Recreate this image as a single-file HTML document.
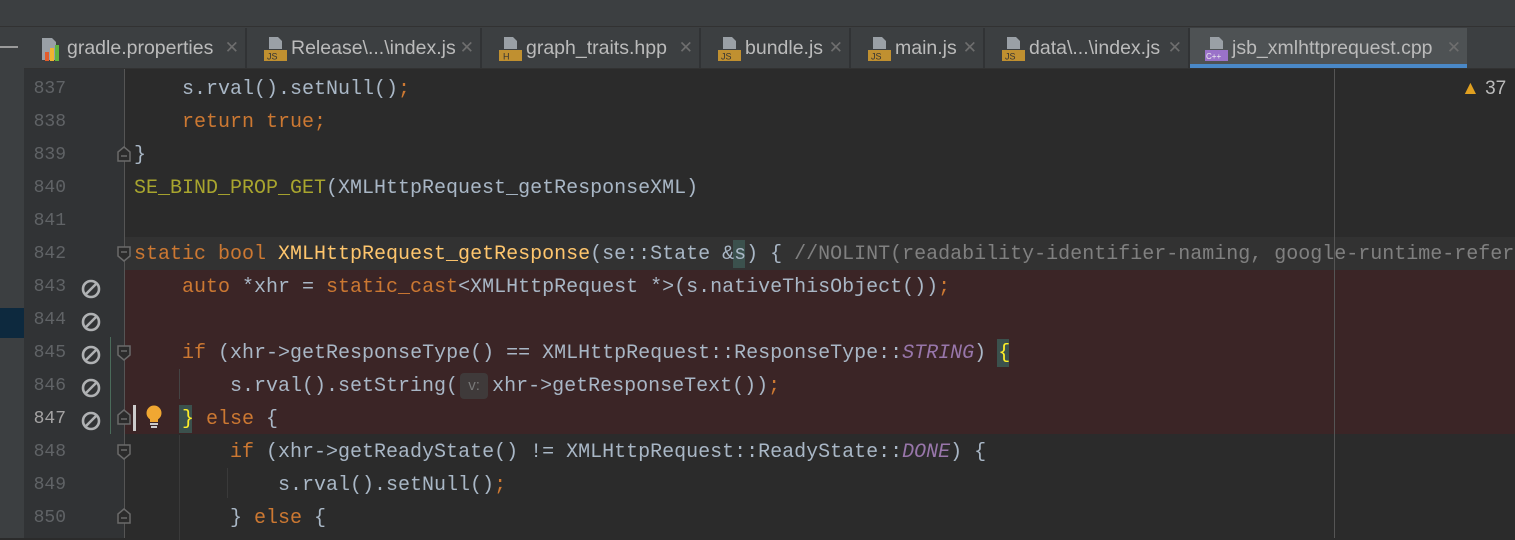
<!DOCTYPE html>
<html><head><meta charset="utf-8"><style>
*{margin:0;padding:0;box-sizing:border-box}
body{width:1515px;height:538px;overflow:hidden;background:#2b2b2b;position:relative;font-family:"Liberation Sans",sans-serif}
.a{position:absolute}
.top{left:0;top:0;width:1515px;height:27px;background:#3c3f41;border-bottom:1px solid #323232}
.left{left:0;top:27px;width:24px;height:511px;background:#3c3f41}
.tabs{left:24px;top:27px;width:1491px;height:42px;background:#3c3f41;border-bottom:1px solid #323232}
.tab{position:absolute;top:28px;height:40px;background:#3c3f41;color:#bbbbbb;font-size:19.5px;line-height:40px;border-right:2px solid #313335}
.tab .ic{position:absolute;left:14px;top:8px;width:24px;height:26px}
.tab .t{position:absolute;left:42px;top:0}
.tab .x{position:absolute;right:6px;top:0;color:#6e6e6e;font-size:17px}
.gut{left:24px;top:69px;width:100px;height:469px;background:#313335}
.ln{position:absolute;left:24px;width:42px;text-align:right;font-family:"Liberation Mono",monospace;font-size:18px;color:#606366;line-height:33px}
.code{position:absolute;left:134px;font-family:"Liberation Mono",monospace;font-size:20px;line-height:33px;color:#a9b7c6;white-space:pre}
.k{color:#cc7832}.f{color:#ffc66d}.m{color:#a8a52e}.c{color:#808080}.e{color:#9876aa;font-style:italic}
.no{position:absolute;left:80px;width:22px;height:22px}
.fold{position:absolute;left:117px;width:14px;height:16px}
</style></head><body>
<div class="a top"></div>
<div class="a left"></div>
<div class="a" style="left:0;top:46px;width:18px;height:2px;background:#9a9a9a"></div>
<div class="a" style="left:0;top:308px;width:24px;height:30px;background:#0d293e"></div>
<div class="a tabs"></div>

<div class="tab" style="left:25px;width:222px"><svg class="ic" viewBox="0 0 24 26"><path d="M3 2h10l4 4v18H3z" fill="#9aa0a6"/><rect x="6" y="16" width="4" height="9" fill="#e35c2b"/><rect x="11" y="12" width="4" height="13" fill="#f0b330"/><rect x="16" y="9" width="4" height="16" fill="#5fb340"/></svg><span class="t">gradle.properties</span><span class="x">✕</span></div>
<div class="tab" style="left:249px;width:233px"><svg class="ic" viewBox="0 0 24 26"><path d="M6 1h9l4 4v8H6z" fill="#9aa0a6"/><rect x="1" y="14" width="23" height="11" fill="#c09030"/><text x="4" y="23.5" font-size="9" fill="#333" font-family="Liberation Sans">JS</text></svg><span class="t">Release\...\index.js</span><span class="x">✕</span></div>
<div class="tab" style="left:484px;width:217px"><svg class="ic" viewBox="0 0 24 26"><path d="M6 1h9l4 4v8H6z" fill="#9aa0a6"/><rect x="1" y="14" width="23" height="11" fill="#c09030"/><text x="5" y="23.5" font-size="9" fill="#333" font-family="Liberation Sans">H</text></svg><span class="t">graph_traits.hpp</span><span class="x">✕</span></div>
<div class="tab" style="left:703px;width:148px"><svg class="ic" viewBox="0 0 24 26"><path d="M6 1h9l4 4v8H6z" fill="#9aa0a6"/><rect x="1" y="14" width="23" height="11" fill="#c09030"/><text x="4" y="23.5" font-size="9" fill="#333" font-family="Liberation Sans">JS</text></svg><span class="t">bundle.js</span><span class="x">✕</span></div>
<div class="tab" style="left:853px;width:132px"><svg class="ic" viewBox="0 0 24 26"><path d="M6 1h9l4 4v8H6z" fill="#9aa0a6"/><rect x="1" y="14" width="23" height="11" fill="#c09030"/><text x="4" y="23.5" font-size="9" fill="#333" font-family="Liberation Sans">JS</text></svg><span class="t">main.js</span><span class="x">✕</span></div>
<div class="tab" style="left:987px;width:203px"><svg class="ic" viewBox="0 0 24 26"><path d="M6 1h9l4 4v8H6z" fill="#9aa0a6"/><rect x="1" y="14" width="23" height="11" fill="#c09030"/><text x="4" y="23.5" font-size="9" fill="#333" font-family="Liberation Sans">JS</text></svg><span class="t">data\...\index.js</span><span class="x">✕</span></div>
<div class="tab" style="left:1190px;width:277px;background:#4e5254;border-right:none"><svg class="ic" viewBox="0 0 24 26"><path d="M6 1h9l4 4v8H6z" fill="#9aa0a6"/><rect x="1" y="14" width="23" height="11" fill="#9a72c9"/><text x="2" y="23" font-size="8" fill="#eee" font-family="Liberation Sans">C++</text></svg><span class="t">jsb_xmlhttprequest.cpp</span><span class="x">✕</span></div>
<div class="a" style="left:1190px;top:64px;width:277px;height:4px;background:#4a88c7"></div>

<div class="a gut"></div>
<div class="a" style="left:124px;top:237px;width:1391px;height:33px;background:#323232"></div>
<div class="a" style="left:124px;top:270px;width:1391px;height:164px;background:#3b2526"></div>
<div class="a" style="left:24px;top:402px;width:100px;height:33px;background:#313335"></div>
<div class="a" style="left:124px;top:69px;width:1px;height:469px;background:#555"></div>
<div class="a" style="left:1334px;top:69px;width:1px;height:469px;background:#555"></div>
<div class="a" style="left:110px;top:337px;width:1px;height:97px;background:#4a6b5a"></div>
<div class="a" style="left:133px;top:405px;width:3px;height:26px;background:#ccc"></div>
<div class="a" style="left:179px;top:405px;width:13px;height:28px;background:#3b514d"></div>
<div class="a" style="left:997px;top:339px;width:12px;height:28px;background:#3b514d"></div>
<div class="a" style="left:733px;top:240px;width:12px;height:28px;background:#3b514d"></div>
<div class="a" style="left:179px;top:369px;width:1px;height:30px;background:#444"></div>
<div class="a" style="left:179px;top:435px;width:1px;height:105px;background:#3a3a3a"></div>
<div class="a" style="left:227px;top:468px;width:1px;height:30px;background:#3a3a3a"></div>

<div class="a" style="left:1461px;top:78px;font-size:19px;color:#bbb"><span style="color:#e0a020">▲</span> 37</div>

<div class="ln" style="top:73px">837</div>
<div class="ln" style="top:106px">838</div>
<div class="ln" style="top:139px">839</div>
<div class="ln" style="top:172px">840</div>
<div class="ln" style="top:205px">841</div>
<div class="ln" style="top:238px">842</div>
<div class="ln" style="top:271px">843</div>
<div class="ln" style="top:304px">844</div>
<div class="ln" style="top:337px">845</div>
<div class="ln" style="top:370px">846</div>
<div class="ln" style="top:403px;color:#a4a3a3">847</div>
<div class="ln" style="top:436px">848</div>
<div class="ln" style="top:469px">849</div>
<div class="ln" style="top:502px">850</div>

<svg class="no" style="top:278px" viewBox="0 0 22 22"><circle cx="11" cy="11" r="8" fill="none" stroke="#afb1b3" stroke-width="2.6"/><path d="M6 16L16 6" stroke="#afb1b3" stroke-width="2.6"/></svg>
<svg class="no" style="top:311px" viewBox="0 0 22 22"><circle cx="11" cy="11" r="8" fill="none" stroke="#afb1b3" stroke-width="2.6"/><path d="M6 16L16 6" stroke="#afb1b3" stroke-width="2.6"/></svg>
<svg class="no" style="top:344px" viewBox="0 0 22 22"><circle cx="11" cy="11" r="8" fill="none" stroke="#afb1b3" stroke-width="2.6"/><path d="M6 16L16 6" stroke="#afb1b3" stroke-width="2.6"/></svg>
<svg class="no" style="top:377px" viewBox="0 0 22 22"><circle cx="11" cy="11" r="8" fill="none" stroke="#afb1b3" stroke-width="2.6"/><path d="M6 16L16 6" stroke="#afb1b3" stroke-width="2.6"/></svg>
<svg class="no" style="top:410px" viewBox="0 0 22 22"><circle cx="11" cy="11" r="8" fill="none" stroke="#afb1b3" stroke-width="2.6"/><path d="M6 16L16 6" stroke="#afb1b3" stroke-width="2.6"/></svg>

<svg class="fold" style="top:146px" viewBox="0 0 14 16"><path d="M1 15V6L7 1L13 6V15Z" fill="#2b2b2b" stroke="#6a6a6a" stroke-width="1.5"/><path d="M4 10h6" stroke="#6a6a6a" stroke-width="1.5"/></svg>
<svg class="fold" style="top:246px" viewBox="0 0 14 16"><path d="M1 1V10L7 15L13 10V1Z" fill="#2b2b2b" stroke="#6a6a6a" stroke-width="1.5"/><path d="M4 6h6" stroke="#6a6a6a" stroke-width="1.5"/></svg>
<svg class="fold" style="top:345px" viewBox="0 0 14 16"><path d="M1 1V10L7 15L13 10V1Z" fill="#2b2b2b" stroke="#6a6a6a" stroke-width="1.5"/><path d="M4 6h6" stroke="#6a6a6a" stroke-width="1.5"/></svg>
<svg class="fold" style="top:409px" viewBox="0 0 14 16"><path d="M1 15V6L7 1L13 6V15Z" fill="#2b2b2b" stroke="#6a6a6a" stroke-width="1.5"/><path d="M4 10h6" stroke="#6a6a6a" stroke-width="1.5"/></svg>
<svg class="fold" style="top:444px" viewBox="0 0 14 16"><path d="M1 1V10L7 15L13 10V1Z" fill="#2b2b2b" stroke="#6a6a6a" stroke-width="1.5"/><path d="M4 6h6" stroke="#6a6a6a" stroke-width="1.5"/></svg>
<svg class="fold" style="top:508px" viewBox="0 0 14 16"><path d="M1 15V6L7 1L13 6V15Z" fill="#2b2b2b" stroke="#6a6a6a" stroke-width="1.5"/><path d="M4 10h6" stroke="#6a6a6a" stroke-width="1.5"/></svg>

<svg class="a" style="left:144px;top:404px" width="20" height="26" viewBox="0 0 20 26"><circle cx="10" cy="9" r="7.5" fill="#f0a732"/><rect x="6" y="15" width="8" height="3" fill="#f0a732"/><rect x="6" y="19" width="8" height="2" fill="#ccc"/><rect x="7" y="22" width="6" height="2" fill="#ccc"/></svg>

<div class="code" style="top:73px">    s.rval().setNull()<span class="k">;</span></div>
<div class="code" style="top:106px">    <span class="k">return true;</span></div>
<div class="code" style="top:139px">}</div>
<div class="code" style="top:172px"><span class="m">SE_BIND_PROP_GET</span>(XMLHttpRequest_getResponseXML)</div>
<div class="code" style="top:238px"><span class="k">static bool </span><span class="f">XMLHttpRequest_getResponse</span>(se::State &amp;s) { <span class="c">//NOLINT(readability-identifier-naming, google-runtime-references)</span></div>
<div class="code" style="top:271px">    <span class="k">auto </span>*xhr = <span class="k">static_cast</span>&lt;XMLHttpRequest *&gt;(s.nativeThisObject())<span class="k">;</span></div>
<div class="code" style="top:337px">    <span class="k">if </span>(xhr-&gt;getResponseType() == XMLHttpRequest::ResponseType::<span class="e">STRING</span>) <span style="color:#ffef28">{</span></div>
<div class="code" style="top:370px">        s.rval().setString(<span style="display:inline-block;width:28px;height:26px;margin:0 4px 0 2px;background:#3f3a3a;border-radius:4px;color:#787878;font-size:15px;line-height:26px;text-align:center;vertical-align:middle;font-family:'Liberation Sans',sans-serif">v:</span>xhr-&gt;getResponseText())<span class="k">;</span></div>
<div class="code" style="top:403px">    <span style="color:#ffef28">}</span><span class="k"> else </span>{</div>
<div class="code" style="top:436px">        <span class="k">if </span>(xhr-&gt;getReadyState() != XMLHttpRequest::ReadyState::<span class="e">DONE</span>) {</div>
<div class="code" style="top:469px">            s.rval().setNull()<span class="k">;</span></div>
<div class="code" style="top:502px">        } <span class="k">else </span>{</div>
</body></html>
